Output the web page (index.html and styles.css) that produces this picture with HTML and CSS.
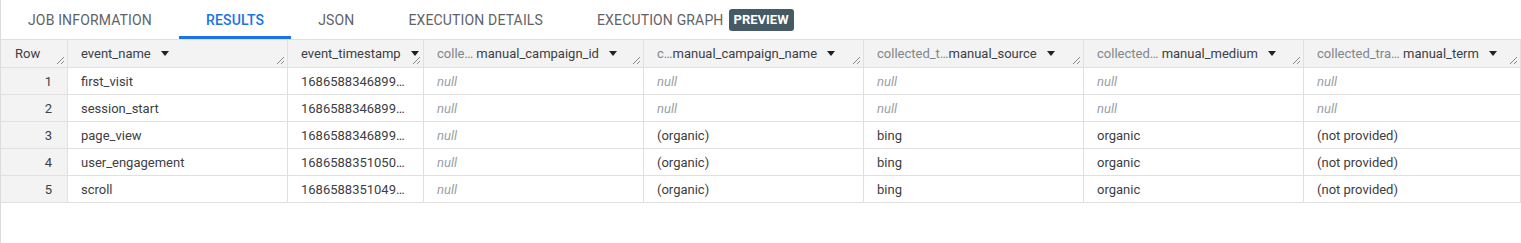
FILE: index.html
```html
<!DOCTYPE html>
<html>
<head>
<meta charset="utf-8">
<link rel="stylesheet" href="styles.css">
</head>
<body>
<div class="page">
  <nav class="tabs">
    <div class="tab">JOB INFORMATION</div>
    <div class="tab active">RESULTS</div>
    <div class="tab">JSON</div>
    <div class="tab">EXECUTION DETAILS</div>
    <div class="tab">EXECUTION GRAPH <span class="badge">PREVIEW</span></div>
  </nav>
  <div class="grid">
    <div class="hcell rowh">Row<i class="grip"></i></div>
    <div class="hcell"><span class="lbl">event_name</span><i class="sort"></i><i class="grip"></i></div>
    <div class="hcell"><span class="lbl">event_timestamp</span><i class="sort"></i><i class="grip"></i></div>
    <div class="hcell"><span class="lbl"><span class="pre">colle…</span> manual_campaign_id</span><i class="sort"></i><i class="grip"></i></div>
    <div class="hcell"><span class="lbl"><span class="pre">c…</span>manual_campaign_name</span><i class="sort"></i><i class="grip"></i></div>
    <div class="hcell"><span class="lbl"><span class="pre">collected_t…</span>manual_source</span><i class="sort"></i><i class="grip"></i></div>
    <div class="hcell"><span class="lbl"><span class="pre">collected…</span> manual_medium</span><i class="sort"></i><i class="grip"></i></div>
    <div class="hcell"><span class="lbl"><span class="pre">collected_tra…</span> manual_term</span><i class="sort"></i><i class="grip"></i></div>

    <div class="cell num">1</div>
    <div class="cell">first_visit</div>
    <div class="cell">1686588346899…</div>
    <div class="cell null">null</div>
    <div class="cell null">null</div>
    <div class="cell null">null</div>
    <div class="cell null">null</div>
    <div class="cell null">null</div>

    <div class="cell num">2</div>
    <div class="cell">session_start</div>
    <div class="cell">1686588346899…</div>
    <div class="cell null">null</div>
    <div class="cell null">null</div>
    <div class="cell null">null</div>
    <div class="cell null">null</div>
    <div class="cell null">null</div>

    <div class="cell num">3</div>
    <div class="cell">page_view</div>
    <div class="cell">1686588346899…</div>
    <div class="cell null">null</div>
    <div class="cell">(organic)</div>
    <div class="cell">bing</div>
    <div class="cell">organic</div>
    <div class="cell">(not provided)</div>

    <div class="cell num">4</div>
    <div class="cell">user_engagement</div>
    <div class="cell">1686588351050…</div>
    <div class="cell null">null</div>
    <div class="cell">(organic)</div>
    <div class="cell">bing</div>
    <div class="cell">organic</div>
    <div class="cell">(not provided)</div>

    <div class="cell num">5</div>
    <div class="cell">scroll</div>
    <div class="cell">1686588351049…</div>
    <div class="cell null">null</div>
    <div class="cell">(organic)</div>
    <div class="cell">bing</div>
    <div class="cell">organic</div>
    <div class="cell">(not provided)</div>
  </div>
</div>
</body>
</html>
```

FILE: styles.css
```css
html, body {
  margin: 0;
  padding: 0;
  background: #ffffff;
}
body {
  font-family: Roboto, "Liberation Sans", Arial, sans-serif;
  color: #3c4043;
  overflow: hidden;
}
.page {
  width: 1521px;
  height: 243px;
  border-left: 1px solid #dadce0;
  box-sizing: border-box;
}
.tabs {
  display: flex;
  height: 39px;
  box-sizing: border-box;
}
.tab {
  display: flex;
  align-items: center;
  padding: 0 27px;
  font-size: 14px;
  letter-spacing: 0.15px;
  color: #5f6368;
  border-bottom: 3px solid transparent;
  padding-top: 3px;
  box-sizing: border-box;
}
.tab.active {
  color: #1a73e8;
  border-bottom-color: #1a73e8;
  font-weight: 500;
}
.badge {
  margin-left: 5px;
  background: #455a64;
  color: #ffffff;
  font-weight: 700;
  font-size: 13px;
  letter-spacing: 0;
  padding: 0 5px;
  height: 22px;
  line-height: 22px;
  border-radius: 3px;
}
.grid {
  display: grid;
  grid-template-columns: 67px 220px 136px 220px 220px 220px 220px 1fr;
  grid-auto-rows: 27px;
  grid-template-rows: 28px;
  border-top: 1px solid #e0e0e0;
  font-size: 13px;
}
.hcell, .cell {
  position: relative;
  display: flex;
  align-items: center;
  border-right: 1px solid #e0e0e0;
  border-bottom: 1px solid #e0e0e0;
  padding-left: 13px;
  box-sizing: border-box;
  white-space: nowrap;
  overflow: hidden;
  min-width: 0;
}
.hcell {
  background: #f3f3f3;
  color: #3c4043;
  padding-right: 4px;
}
.rowh {
  padding-left: 14px;
}
.lbl {
  overflow: hidden;
  text-overflow: clip;
  flex: 0 1 auto;
  min-width: 0;
}
.pre {
  color: #80868b;
}
.sort {
  flex: 0 0 auto;
  width: 0;
  height: 0;
  margin-left: 10px;
  border-left: 4px solid transparent;
  border-right: 4px solid transparent;
  border-top: 5px solid #202124;
}
.grip {
  position: absolute;
  right: 3px;
  bottom: 3px;
  width: 7px;
  height: 7px;
  background:
    linear-gradient(135deg, transparent 45%, #8a8a8a 45%, #8a8a8a 57%, transparent 57%) no-repeat 0 0 / 7px 7px,
    linear-gradient(135deg, transparent 72%, #8a8a8a 72%, #8a8a8a 84%, transparent 84%) no-repeat 0 0 / 7px 7px;
}
.cell.num {
  background: #f3f3f3;
  justify-content: flex-end;
  padding-left: 0;
  padding-right: 15px;
}
.cell.null {
  color: #9aa0a6;
  font-style: italic;
}
```
